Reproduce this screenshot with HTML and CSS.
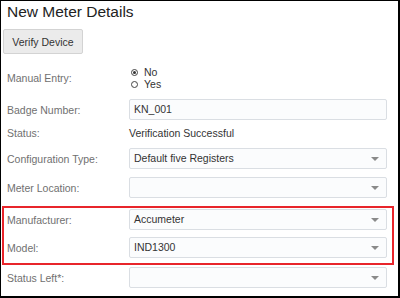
FILE: index.html
```html
<!DOCTYPE html>
<html lang="en">
<head>
	<meta charset="UTF-8">
	<title>New Meter Details</title>
	<link rel="stylesheet" href="styles.css">
</head>
<body>
	<div class="frame">
		<h1 class="title">New Meter Details</h1>
		<button class="btn" type="button">Verify Device</button>

		<div class="row row-manual">
			<div class="label">Manual Entry:</div>
			<div class="radios">
				<div class="radio"><span class="dot on"></span>No</div>
				<div class="radio"><span class="dot"></span>Yes</div>
			</div>
		</div>

		<div class="row row-badge">
			<div class="label">Badge Number:</div>
			<div class="field">KN_001</div>
		</div>

		<div class="row row-status">
			<div class="label">Status:</div>
			<div class="value">Verification Successful</div>
		</div>

		<div class="row row-config">
			<div class="label">Configuration Type:</div>
			<div class="field select">Default five Registers<span class="caret"></span></div>
		</div>

		<div class="row row-location">
			<div class="label">Meter Location:</div>
			<div class="field select"><span class="caret"></span></div>
		</div>

		<div class="highlight">
			<div class="row row-manuf">
				<div class="label">Manufacturer:</div>
				<div class="field select">Accumeter<span class="caret"></span></div>
			</div>
			<div class="row row-model">
				<div class="label">Model:</div>
				<div class="field select">IND1300<span class="caret"></span></div>
			</div>
		</div>

		<div class="row row-left">
			<div class="label">Status Left*:</div>
			<div class="field select"><span class="caret"></span></div>
		</div>
	</div>
</body>
</html>
```

FILE: styles.css
```css
* {
	margin: 0;
	padding: 0;
	box-sizing: border-box;
}
body {
	background: #fff;
	font-family: "Liberation Sans", Arial, sans-serif;
	font-size: 10.5px;
	color: #333;
}
.frame {
	width: 400px;
	height: 298px;
	border: solid #000;
	border-width: 1px 2px 2px 1px;
	padding-top: 2px;
	overflow: hidden;
}
.title {
	font-size: 15.5px;
	font-weight: normal;
	line-height: 18px;
	color: #222;
	padding-left: 6px;
}
.btn {
	display: block;
	margin: 8px 0 0 2px;
	width: 80px;
	height: 25px;
	font-family: inherit;
	font-size: 10.5px;
	color: #333;
	background: #ebebeb;
	border: 1px solid #d3d3d3;
	border-radius: 2px;
}
.row {
	display: flex;
	align-items: center;
	padding-left: 6px;
}
.label {
	width: 122px;
	color: #707070;
}
.field {
	position: relative;
	width: 258px;
	height: 21px;
	line-height: 19px;
	padding-left: 4px;
	background: #fbfcfd;
	border: 1px solid #dadee3;
	border-radius: 2px;
	color: #333;
}
.caret {
	position: absolute;
	right: 7px;
	top: 8px;
	border-left: 4px solid transparent;
	border-right: 4px solid transparent;
	border-top: 4px solid #8a8a8a;
}
.value {
	color: #333;
}
.row-manual {
	margin-top: 12px;
}
.radios {
	display: flex;
	flex-direction: column;
}
.radio {
	display: flex;
	align-items: center;
	height: 12px;
	color: #333;
}
.dot {
	width: 7px;
	height: 7px;
	margin: 0 6px 0 2px;
	border: 1px solid #444;
	border-radius: 50%;
	position: relative;
}
.dot.on::after {
	content: "";
	position: absolute;
	left: 1px;
	top: 1px;
	width: 3px;
	height: 3px;
	border-radius: 50%;
	background: #333;
}
.row-badge {
	margin-top: 9px;
}
.row-status {
	margin-top: 4px;
	height: 18px;
}
.row-config {
	margin-top: 6px;
}
.row-location {
	margin-top: 8px;
}
.highlight {
	margin: 8px 4px 0 1px;
	border: 2px solid #e8252b;
	padding: 1px 0 5px 0;
}
.highlight .row {
	padding-left: 3px;
}
.row-model {
	margin-top: 7px;
}
.row-left {
	margin-top: 2px;
}
```
